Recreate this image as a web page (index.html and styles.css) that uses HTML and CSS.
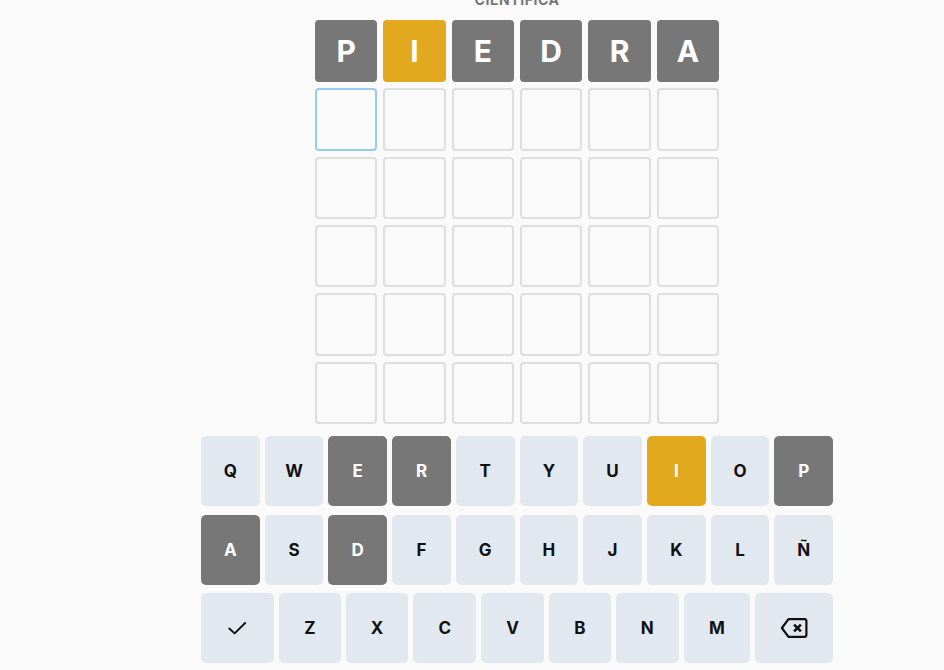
FILE: index.html
```html
<!DOCTYPE html>
<html lang="es">
<head>
<meta charset="utf-8">
<title>Palabra</title>
<link rel="stylesheet" href="styles.css">
</head>
<body>
<main class="game">
  <h1 class="category">CIENTÍFICA</h1>
  <div class="board">
    <div class="tile absent">P</div>
    <div class="tile present">I</div>
    <div class="tile absent">E</div>
    <div class="tile absent">D</div>
    <div class="tile absent">R</div>
    <div class="tile absent">A</div>

    <div class="tile empty active"></div>
    <div class="tile empty"></div><div class="tile empty"></div><div class="tile empty"></div><div class="tile empty"></div><div class="tile empty"></div>
    <div class="tile empty"></div><div class="tile empty"></div><div class="tile empty"></div><div class="tile empty"></div><div class="tile empty"></div><div class="tile empty"></div>
    <div class="tile empty"></div><div class="tile empty"></div><div class="tile empty"></div><div class="tile empty"></div><div class="tile empty"></div><div class="tile empty"></div>
    <div class="tile empty"></div><div class="tile empty"></div><div class="tile empty"></div><div class="tile empty"></div><div class="tile empty"></div><div class="tile empty"></div>
    <div class="tile empty"></div><div class="tile empty"></div><div class="tile empty"></div><div class="tile empty"></div><div class="tile empty"></div><div class="tile empty"></div>
  </div>

  <div class="keyboard">
    <div class="krow even">
      <button class="key">Q</button>
      <button class="key">W</button>
      <button class="key absent">E</button>
      <button class="key absent">R</button>
      <button class="key">T</button>
      <button class="key">Y</button>
      <button class="key">U</button>
      <button class="key present">I</button>
      <button class="key">O</button>
      <button class="key absent">P</button>
    </div>
    <div class="krow even">
      <button class="key absent">A</button>
      <button class="key">S</button>
      <button class="key absent">D</button>
      <button class="key">F</button>
      <button class="key">G</button>
      <button class="key">H</button>
      <button class="key">J</button>
      <button class="key">K</button>
      <button class="key">L</button>
      <button class="key">Ñ</button>
    </div>
    <div class="krow auto">
      <button class="key" aria-label="Enviar">
        <svg class="icon-check" width="23" height="24" viewBox="0 0 24 24" fill="none" stroke="#111" stroke-width="2" stroke-linecap="round" stroke-linejoin="round"><polyline points="3.4 12.6 9 17.6 20 6.8"/></svg>
      </button>
      <button class="key">Z</button>
      <button class="key">X</button>
      <button class="key">C</button>
      <button class="key">V</button>
      <button class="key">B</button>
      <button class="key">N</button>
      <button class="key">M</button>
      <button class="key" aria-label="Borrar">
        <svg class="icon-back" width="28" height="20" viewBox="0 0 27 20" fill="none" stroke="#111" stroke-width="2.2" stroke-linejoin="round"><path d="M8 1.2H24a1.9 1.9 0 0 1 1.9 1.9V16.9a1.9 1.9 0 0 1-1.9 1.9H8L1.4 10Z"/><path d="M13.6 6.6 20.4 13.4M20.4 6.6 13.6 13.4" stroke-width="2.6"/></svg>
      </button>
    </div>
  </div>
</main>
</body>
</html>
```

FILE: styles.css
```css
* { box-sizing: border-box; }

html, body {
  margin: 0;
  padding: 0;
  background: #fafafa;
  height: 100%;
  overflow: hidden;
}

body {
  font-family: Inter, "Liberation Sans", Arial, sans-serif;
  color: #111;
}

.game {
  width: 854px;
  margin-left: 90px;
  display: flex;
  flex-direction: column;
  align-items: center;
}

.category {
  margin: -8px 0 0 0;
  font-size: 14px;
  line-height: 16px;
  font-weight: 700;
  letter-spacing: 0.04em;
  color: #777;
}

.board {
  margin-top: 12px;
  width: 404px;
  display: grid;
  grid-template-columns: repeat(6, 1fr);
  gap: 6px;
}

.tile {
  aspect-ratio: 1 / 1;
  border-radius: 4px;
  display: flex;
  align-items: center;
  justify-content: center;
  font-size: 30px;
  font-weight: 700;
  color: #fff;
}

.tile.empty {
  border: 2px solid #dedede;
}

.tile.active {
  border-color: #97cbef;
}

.tile.absent { background: #777777; }
.tile.present { background: #e2a81e; }

.keyboard {
  margin-top: 12px;
  width: 632px;
  display: flex;
  flex-direction: column;
  gap: 8.5px;
}

.krow {
  display: flex;
  gap: 5px;
}

.key {
  height: 70px;
  border: none;
  border-radius: 5px;
  background: #e2e8f0;
  color: #111;
  font-family: inherit;
  font-size: 17px;
  font-weight: 700;
  display: flex;
  align-items: center;
  justify-content: center;
  padding: 0;
  margin: 0;
}

.krow.even .key { flex: 1 1 0; }
.krow.auto .key { flex: 1 1 auto; }

.key.absent { background: #777777; color: #fff; }
.key.present { background: #e2a81e; color: #fff; }

.key svg { display: block; }
```
